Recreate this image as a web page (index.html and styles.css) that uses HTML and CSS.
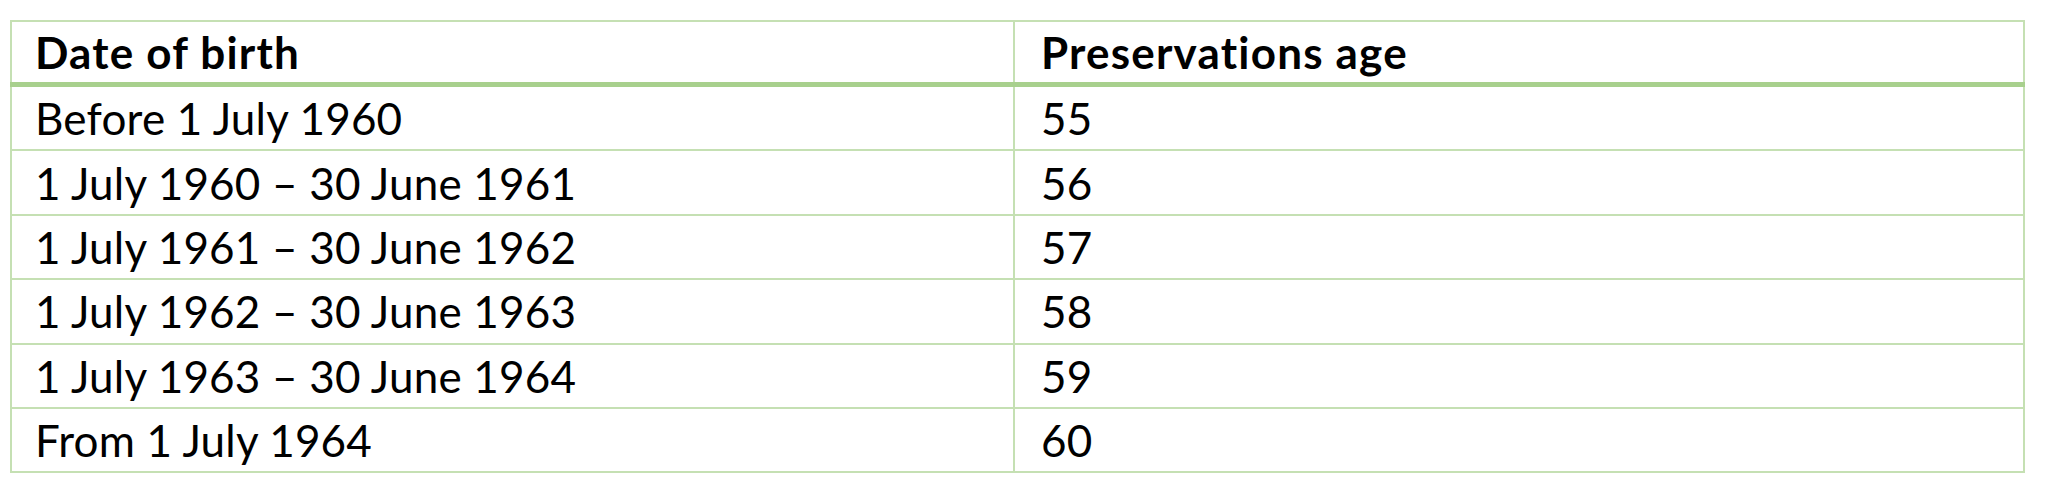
FILE: index.html
```html
<!DOCTYPE html>
<html>
<head>
<meta charset="utf-8">
<link rel="stylesheet" href="styles.css">
</head>
<body>
<table class="ages">
  <thead>
    <tr><th class="c1">Date of birth</th><th class="c2">Preservations age</th></tr>
  </thead>
  <tbody>
    <tr><td>Before 1 July 1960</td><td class="c2">55</td></tr>
    <tr><td>1 July 1960 – 30 June 1961</td><td class="c2">56</td></tr>
    <tr><td>1 July 1961 – 30 June 1962</td><td class="c2">57</td></tr>
    <tr><td>1 July 1962 – 30 June 1963</td><td class="c2">58</td></tr>
    <tr><td>1 July 1963 – 30 June 1964</td><td class="c2">59</td></tr>
    <tr><td>From 1 July 1964</td><td class="c2">60</td></tr>
  </tbody>
</table>
</body>
</html>
```

FILE: styles.css
```css
html, body {
  margin: 0;
  background: #ffffff;
}
body {
  padding: 20px 0 0 10px;
  font-family: Lato, "Open Sans", sans-serif;
  color: #000000;
}
.ages {
  border-collapse: collapse;
  width: 2015px;
  table-layout: fixed;
  font-size: 44px;
}
.ages th,
.ages td {
  border: 2px solid #c5e0b3;
  text-align: left;
  vertical-align: middle;
  padding: 0 0 0 23px;
  white-space: nowrap;
}
.ages th {
  font-weight: 700;
  letter-spacing: 1.2px;
  height: 60px;
  border-bottom: 5px solid #a8d08d;
}
.ages td {
  font-weight: 400;
  letter-spacing: 0.2px;
  height: 62.4px;
}
.ages .c1 {
  width: 978px;
}
.ages .c2 {
  padding-left: 26px;
}
```
